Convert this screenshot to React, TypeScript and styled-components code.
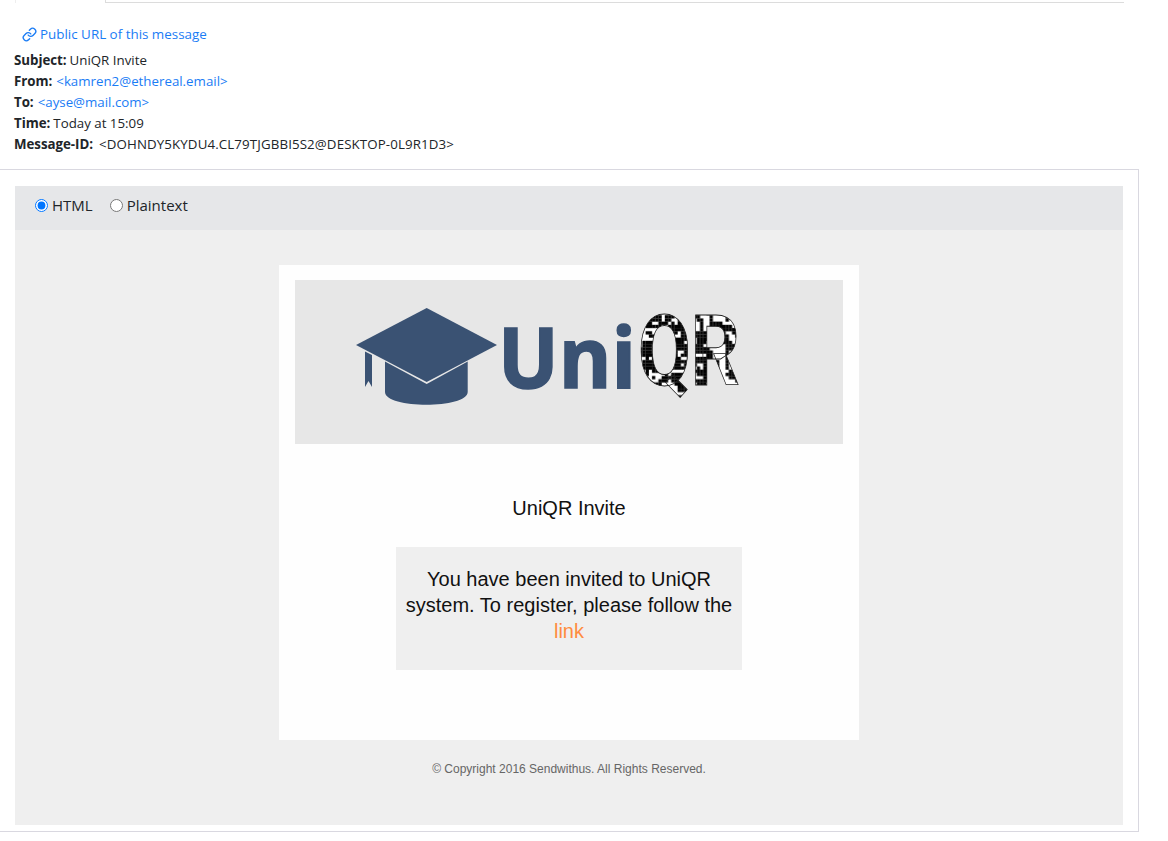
import React from "react";
import styled, { createGlobalStyle } from "styled-components";
import { Link } from "lucide-react";

const Global = createGlobalStyle`
  html, body { margin: 0; padding: 0; background: #fff; overflow: hidden; }
  body { font-family: "Open Sans", "Noto Sans", sans-serif; color: #212529; }
`;

const Page = styled.div`
  width: 1168px;
  height: 841px;
  overflow: hidden;
`;
const TabBar = styled.div`
  display: flex;
  height: 3px;
  width: 1124px;
  padding-left: 15px;
  box-sizing: border-box;
`;
const ActiveTab = styled.div`
  width: 91px;
  box-sizing: border-box;
  border-left: 1px solid #eeeeee;
  border-right: 1px solid #dcdcdc;
`;
const TabRule = styled.div`
  flex: 1;
  border-bottom: 1px solid #dcdcdc;
`;
const Meta = styled.div`
  padding: 21px 0 14px 14px;
  font-size: 13.3px;
  line-height: 21px;
`;
const PublicLink = styled.a`
  display: flex;
  align-items: center;
  gap: 3px;
  padding-left: 8px;
  margin-bottom: 5px;
  height: 21px;
  color: #1a7cf5;
  font-size: 13.4px;
`;
const Row = styled.div`
  height: 21px;
  white-space: nowrap;
  color: #212529;
`;
const Label = styled.b`
  font-weight: 700;
  margin-right: 3px;
  letter-spacing: -0.03px;
`;
const Addr = styled.span`
  color: #1a7cf5;
  margin-left: 1px;
`;
const MessageId = styled.span`
  letter-spacing: 0.12px;
  margin-left: 3px;
`;
const Panel = styled.div`
  width: 1140px;
  margin-left: -1px;
  box-sizing: border-box;
  border: 1px solid #d9d8e0;
  padding: 16px 15px 6px 15px;
`;
const Toolbar = styled.div`
  display: flex;
  align-items: center;
  gap: 17px;
  height: 44px;
  background: #e6e7e9;
  padding: 0 0 6px 20px;
  box-sizing: border-box;
  font-size: 15px;
`;
const RadioLabel = styled.label`
  display: flex;
  align-items: center;
  gap: 4px;
  color: #212529;
`;
const Radio = styled.input`
  width: 13px;
  height: 13px;
  margin: 0;
`;
const Frame = styled.div`
  height: 595px;
  background: #efefef;
  padding-top: 35px;
  box-sizing: border-box;
  font-family: "Liberation Sans", Arial, sans-serif;
`;
const Card = styled.div`
  width: 580px;
  height: 475px;
  margin: 0 auto;
  background: #fefefe;
  padding: 15px 16px 0;
  box-sizing: border-box;
`;
const LogoBox = styled.div`
  height: 164px;
  background: #e7e7e7;
  line-height: 0;
`;
const Title = styled.div`
  margin-top: 52px;
  text-align: center;
  font-size: 20px;
  line-height: 24px;
  color: #111;
`;
const Notice = styled.div`
  width: 346px;
  box-sizing: border-box;
  margin: 27px auto 0;
  padding: 19px 8px 26px;
  background: #efefef;
  text-align: center;
  font-size: 20px;
  line-height: 26px;
  color: #111;
`;
const Accent = styled.a`
  color: #ff8c3f;
`;
const Copyright = styled.div`
  margin-top: 22px;
  text-align: center;
  font-size: 12px;
  line-height: 14px;
  color: #666;
`;

const cells: { x: number; y: number }[] = [];
let seed = 987;
const rnd = () => {
  seed = (seed * 1103515245 + 12345) & 0x7fffffff;
  return (seed >> 16) % 100;
};
let prevRow: boolean[] = [];
for (let y = 0; y < 28; y++) {
  const row: boolean[] = [];
  for (let x = 0; x < 36; x++) {
    const r = rnd();
    let on = r < 57;
    if (x > 0 && r % 3 === 0) on = row[x - 1];
    else if (y > 0 && r % 3 === 1) on = prevRow[x];
    row.push(on);
    if (on) cells.push({ x: x * 3.2, y: y * 3.2 });
  }
  prevRow = row;
}

const QrWord = styled.text`
  font-family: "Roboto", "Liberation Sans", sans-serif;
  font-weight: 700;
  font-size: 98px;
  fill: url(#qr);
  stroke: #222;
  stroke-width: 0.9px;
`;
const UniWord = styled.text`
  font-family: "Open Sans", sans-serif;
  font-weight: 700;
  font-size: 84px;
  fill: #3a5273;
  stroke: #3a5273;
  stroke-width: 1.6px;
`;

const Logo = () => (
  <svg width="548" height="164" viewBox="295 280 548 164">
    <defs>
      <pattern id="qr" patternUnits="userSpaceOnUse" x="636" y="312" width="115.2" height="89.6">
        <rect width="115.2" height="89.6" fill="#fff" />
        {cells.map((c, i) => (
          <rect key={i} x={c.x} y={c.y} width="3.3" height="3.3" fill="#000" />
        ))}
      </pattern>
    </defs>
    <path d="M426.7 308 L497 345 L426.7 382 L356 345 Z" fill="#3a5273" />
    <path d="M385 361.5 L426.7 384 L467.7 361.5 V392 C467.7 409 385 409 385 392 Z" fill="#3a5273" />
    <path d="M365 351.5 L372 355 V387 L368.5 381 L365 387 Z" fill="#3a5273" />
    <UniWord x="498" y="388" textLength="138" lengthAdjust="spacingAndGlyphs">
      Uni
    </UniWord>
    <QrWord x="638" y="385" textLength="102" lengthAdjust="spacingAndGlyphs">
      QR
    </QrWord>
  </svg>
);

export default function App() {
  return (
    <Page>
      <Global />
      <TabBar>
        <ActiveTab />
        <TabRule />
      </TabBar>
      <Meta>
        <PublicLink>
          <Link size={15} strokeWidth={2.2} />
          Public URL of this message
        </PublicLink>
        <Row><Label>Subject:</Label>UniQR Invite</Row>
        <Row><Label>From:</Label><Addr>&lt;kamren2@ethereal.email&gt;</Addr></Row>
        <Row><Label>To:</Label><Addr>&lt;ayse@mail.com&gt;</Addr></Row>
        <Row><Label>Time:</Label>Today at 15:09</Row>
        <Row><Label>Message-ID:</Label><MessageId>&lt;DOHNDY5KYDU4.CL79TJGBBI5S2@DESKTOP-0L9R1D3&gt;</MessageId></Row>
      </Meta>
      <Panel>
        <Toolbar>
          <RadioLabel><Radio type="radio" name="view" defaultChecked />HTML</RadioLabel>
          <RadioLabel><Radio type="radio" name="view" />Plaintext</RadioLabel>
        </Toolbar>
        <Frame>
          <Card>
            <LogoBox><Logo /></LogoBox>
            <Title>UniQR Invite</Title>
            <Notice>
              You have been invited to UniQR system. To register, please follow the <Accent>link</Accent>
            </Notice>
          </Card>
          <Copyright>© Copyright 2016 Sendwithus. All Rights Reserved.</Copyright>
        </Frame>
      </Panel>
    </Page>
  );
}
